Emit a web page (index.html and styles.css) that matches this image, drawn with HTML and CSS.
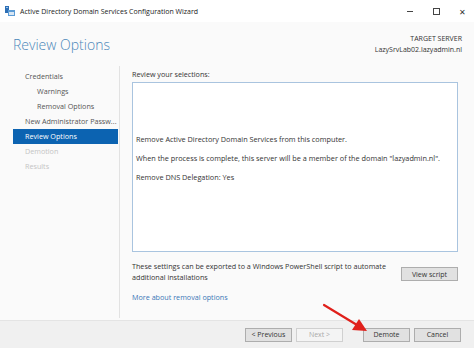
FILE: index.html
```html
<!DOCTYPE html>
<html lang="en">
<head>
    <meta charset="UTF-8">
    <title>Active Directory Domain Services Configuration Wizard</title>
    <link rel="stylesheet" href="styles.css">
</head>
<body>
    <div class="window">
        <div class="titlebar">
            <svg class="app-icon" width="10" height="10" viewBox="0 0 10 10">
                <rect x="0" y="0" width="4" height="7" fill="#2d6fb5"/>
                <rect x="1" y="1" width="2" height="1" fill="#9cc3ea"/>
                <rect x="3" y="4" width="7" height="6" fill="#5b9bd5"/>
                <rect x="4" y="6" width="5" height="3" fill="#d8e6f3"/>
            </svg>
            <span class="title">Active Directory Domain Services Configuration Wizard</span>
            <div class="controls">
                <span class="ctl min"></span>
                <span class="ctl max"></span>
                <span class="ctl close">&#x2715;</span>
            </div>
        </div>

        <div class="header">
            <div class="page-title">Review Options</div>
            <div class="target">
                <div>TARGET SERVER</div>
                <div>LazySrvLab02.lazyadmin.nl</div>
            </div>
        </div>

        <div class="content">
            <div class="nav">
                <a href="#">Credentials</a>
                <a href="#" class="sub">Warnings</a>
                <a href="#" class="sub">Removal Options</a>
                <a href="#">New Administrator Passw...</a>
                <a href="#" class="active">Review Options</a>
                <a href="#" class="disabled">Demotion</a>
                <a href="#" class="disabled">Results</a>
            </div>

            <div class="main">
                <div class="label">Review your selections:</div>
                <div class="review-box">
                    <p>Remove Active Directory Domain Services from this computer.</p>
                    <p>When the process is complete, this server will be a member of the domain "lazyadmin.nl".</p>
                    <p>Remove DNS Delegation: Yes</p>
                </div>
                <div class="export">
                    <div class="export-text">These settings can be exported to a Windows PowerShell script to automate<br>additional installations</div>
                    <button class="btn view-script">View script</button>
                </div>
                <a href="#" class="more-link">More about removal options</a>
            </div>
        </div>

        <div class="footer">
            <button class="btn">&lt; Previous</button>
            <button class="btn" disabled>Next &gt;</button>
            <button class="btn demote">Demote</button>
            <button class="btn">Cancel</button>
        </div>

        <!-- Red annotation arrow -->
        <svg class="arrow" width="474" height="348" viewBox="0 0 474 348">
            <line x1="324" y1="305" x2="357" y2="325" stroke="#e0201b" stroke-width="2.2" stroke-linecap="round"/>
            <polygon points="367,331 352,330 359,319" fill="#e0201b"/>
        </svg>
    </div>
</body>
</html>
```

FILE: styles.css
```css
* {
    box-sizing: border-box;
    margin: 0;
    padding: 0;
    font-family: "Open Sans", "Noto Sans", sans-serif;
}

body {
    background: #fff;
}

.window {
    position: relative;
    width: 474px;
    height: 348px;
    display: flex;
    flex-direction: column;
    background: #fafafa;
    color: #333;
    font-size: 7.2px;
}

.titlebar {
    height: 22px;
    background: #fff;
    display: flex;
    align-items: center;
    padding-left: 5px;
}

.app-icon {
    margin-right: 5px;
}

.title {
    font-size: 7px;
    color: #222;
}

.controls {
    margin-left: auto;
    display: flex;
    align-items: center;
    height: 100%;
}

.ctl {
    width: 27px;
    height: 100%;
    display: flex;
    align-items: center;
    justify-content: center;
    color: #333;
}

.ctl.min::before {
    content: "";
    width: 6px;
    height: 1px;
    background: #444;
}

.ctl.max::before {
    content: "";
    width: 5px;
    height: 5px;
    border: 1px solid #444;
}

.ctl.close {
    font-size: 8px;
    width: 24px;
}

.header {
    height: 44px;
    display: flex;
    justify-content: space-between;
    align-items: center;
    padding: 0 12px 0 13px;
}

.page-title {
    font-size: 14px;
    font-weight: 300;
    color: #4b87b9;
    margin-top: 1px;
}

.target {
    text-align: right;
    font-size: 7px;
    line-height: 11px;
    color: #333;
    margin-top: -1px;
}

.content {
    flex: 1;
    display: flex;
}

.nav {
    width: 120px;
    padding: 3px 1px 0 13px;
    border-right: 1px solid #e2e2e2;
    margin-bottom: 2px;
    display: flex;
    flex-direction: column;
}

.nav a {
    display: block;
    height: 15px;
    line-height: 15px;
    padding-left: 12px;
    text-decoration: none;
    color: #555;
    white-space: nowrap;
}

.nav a.sub {
    padding-left: 24px;
}

.nav a.active {
    background: #0c63b1;
    color: #fff;
}

.nav a.disabled {
    color: #c4c4c4;
}

.main {
    flex: 1;
    padding: 3px 16px 0 12px;
    display: flex;
    flex-direction: column;
}

.label {
    line-height: 11px;
    margin-bottom: 2px;
}

.review-box {
    height: 170px;
    background: #fff;
    border: 1px solid #a9c4df;
    padding: 51px 3px 0;
    color: #333;
    font-size: 7.3px;
}

.review-box p {
    line-height: 11px;
    margin-bottom: 8px;
    white-space: nowrap;
}

.export {
    display: flex;
    align-items: flex-start;
    justify-content: space-between;
    margin-top: 9px;
}

.export-text {
    line-height: 11px;
}

.btn {
    height: 14px;
    width: 47px;
    font-size: 7px;
    background: #e1e1e1;
    border: 1px solid #adadad;
    color: #333;
}

.btn:disabled {
    background: #f4f4f4;
    border-color: #d0d0d0;
    color: #aaa;
}

.view-script {
    width: 57px;
    margin-top: 6px;
}

.more-link {
    margin-top: 9px;
    color: #3a78b7;
    text-decoration: none;
    line-height: 11px;
}

.footer {
    height: 28px;
    background: #f0f0f0;
    border-top: 1px solid #e4e4e4;
    display: flex;
    align-items: center;
    justify-content: flex-end;
    gap: 4px;
    padding-right: 13px;
}

.footer .demote {
    margin-left: 16px;
}

.arrow {
    position: absolute;
    left: 0;
    top: 0;
    pointer-events: none;
}
```
